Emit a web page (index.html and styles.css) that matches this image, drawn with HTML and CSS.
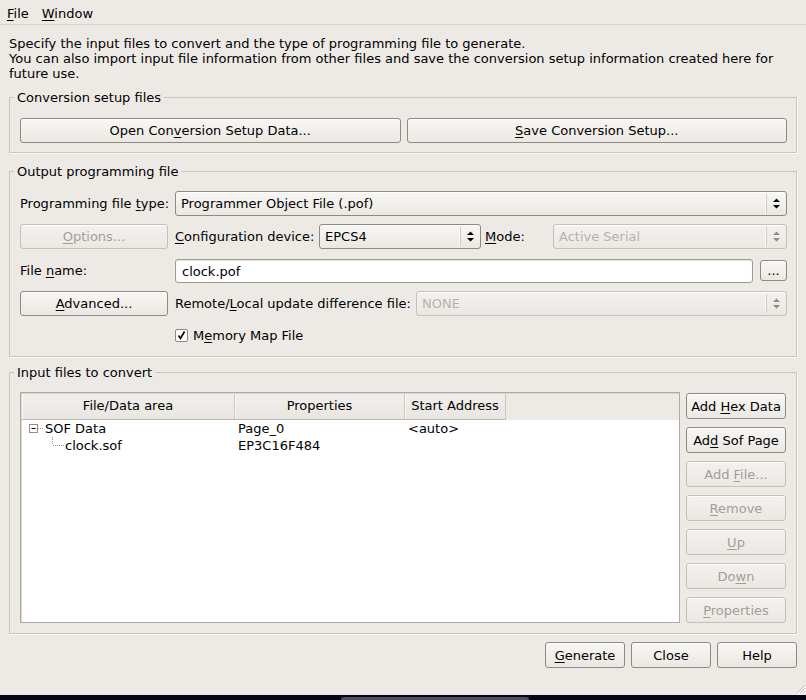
FILE: index.html
```html
<!DOCTYPE html>
<html>
<head>
<meta charset="utf-8">
<title>Convert Programming File</title>
<link rel="stylesheet" href="styles.css">
</head>
<body>
<div class="window">
  <div class="menubar">
    <span class="menu"><u>F</u>ile</span>
    <span class="menu"><u>W</u>indow</span>
  </div>

  <p class="desc">Specify the input files to convert and the type of programming file to generate.<br>You can also import input file information from other files and save the conversion setup information created here for future use.</p>

  <fieldset class="group g1">
    <legend class="legend">Conversion setup files</legend>
    <div class="g1-body">
      <button class="btn grow">Open Con<u>v</u>ersion Setup Data...</button>
      <button class="btn grow"><u>S</u>ave Conversion Setup...</button>
    </div>
  </fieldset>

  <fieldset class="group g2">
    <legend class="legend">Output programming file</legend>
    <div class="g2-body">
      <div class="row r1">
        <label class="lead">Programming file <u>t</u>ype:</label>
        <div class="combo grow"><span class="ctext">Programmer Object File (.pof)</span><span class="carrow"><svg width="7" height="11" viewBox="0 0 7 11"><path d="M3.5 0.5L7 4H0z M0 7h7l-3.5 3.5z"/></svg></span></div>
      </div>
      <div class="row r2">
        <button class="btn lead-btn" disabled><u>O</u>ptions...</button>
        <label class="lbl-conf"><u>C</u>onfiguration device:</label>
        <div class="combo epcs"><span class="ctext">EPCS4</span><span class="carrow"><svg width="7" height="11" viewBox="0 0 7 11"><path d="M3.5 0.5L7 4H0z M0 7h7l-3.5 3.5z"/></svg></span></div>
        <label class="lbl-mode"><u>M</u>ode:</label>
        <div class="combo grow disabled"><span class="ctext">Active Serial</span><span class="carrow"><svg width="7" height="11" viewBox="0 0 7 11"><path d="M3.5 0.5L7 4H0z M0 7h7l-3.5 3.5z"/></svg></span></div>
      </div>
      <div class="row r3">
        <label class="lead">File <u>n</u>ame:</label>
        <div class="input grow">clock.pof</div>
        <button class="btn dots">...</button>
      </div>
      <div class="row r4">
        <button class="btn lead-btn"><u>A</u>dvanced...</button>
        <label class="lbl-remote">Remote/<u>L</u>ocal update difference file:</label>
        <div class="combo grow disabled"><span class="ctext">NONE</span><span class="carrow"><svg width="7" height="11" viewBox="0 0 7 11"><path d="M3.5 0.5L7 4H0z M0 7h7l-3.5 3.5z"/></svg></span></div>
      </div>
      <div class="row r5">
        <span class="check"><svg width="11" height="11" viewBox="0 0 11 11"><path d="M2.5 5.5L4.5 8.5L8.5 1.5" fill="none" stroke="#000" stroke-width="1.6"/></svg></span>
        <span class="check-label">M<u>e</u>mory Map File</span>
      </div>
    </div>
  </fieldset>

  <fieldset class="group g3">
    <legend class="legend">Input files to convert</legend>
    <div class="g3-body">
      <div class="tree">
        <div class="thead">
          <div class="th">File/Data area</div>
          <div class="th">Properties</div>
          <div class="th">Start Address</div>
          <div class="th-fill"></div>
        </div>
        <div class="trow">
          <div class="tcell c1">
            <svg class="tlines" width="24" height="17" viewBox="0 0 24 17"><rect x="8.5" y="4.5" width="8" height="8" fill="#fff" stroke="#8f8f8f"/><path d="M10.5 8.5h4" stroke="#000"/><path d="M17 8.5h6" stroke="#9a9a9a" stroke-dasharray="1 1"/></svg>
            <span>SOF Data</span>
          </div>
          <div class="tcell c2">Page_0</div>
          <div class="tcell c3">&lt;auto&gt;</div>
        </div>
        <div class="trow">
          <div class="tcell c1">
            <svg class="tlines" width="44" height="17" viewBox="0 0 44 17"><path d="M31.5 0v8 M32 8.5h11" stroke="#9a9a9a" stroke-dasharray="1 1"/></svg>
            <span>clock.sof</span>
          </div>
          <div class="tcell c2">EP3C16F484</div>
          <div class="tcell c3"></div>
        </div>
      </div>
      <div class="side">
        <button class="btn side-btn">Add <u>H</u>ex Data</button>
        <button class="btn side-btn">Ad<u>d</u> Sof Page</button>
        <button class="btn side-btn" disabled>Add <u>F</u>ile...</button>
        <button class="btn side-btn" disabled><u>R</u>emove</button>
        <button class="btn side-btn" disabled><u>U</u>p</button>
        <button class="btn side-btn" disabled>Do<u>w</u>n</button>
        <button class="btn side-btn" disabled><u>P</u>roperties</button>
      </div>
    </div>
  </fieldset>

  <div class="actions">
    <button class="btn act"><u>G</u>enerate</button>
    <button class="btn act">Close</button>
    <button class="btn act">Help</button>
  </div>

  <svg class="grip" width="12" height="12" viewBox="0 0 12 12"><path d="M11 3L3 11 M11 6L6 11 M11 9L9 11" stroke="#c4c0ba" stroke-width="1"/><path d="M12 4L4 12 M12 7L7 12 M12 10L10 12" stroke="#fff" stroke-width="1"/></svg>

  <div class="taskbar"><span class="task-tab"></span></div>
</div>
</body>
</html>
```

FILE: styles.css
```css
* { box-sizing: border-box; }

body {
  margin: 0;
  background: #edeae6;
  font-family: "DejaVu Sans", "Noto Sans", sans-serif;
  font-size: 13px;
  line-height: 15px;
  color: #000;
}

u { text-decoration: underline; text-underline-offset: 2px; }

.window {
  width: 806px;
  height: 700px;
  display: flex;
  flex-direction: column;
  position: relative;
  overflow: hidden;
  background: #edeae6;
}

/* menu bar */
.menubar {
  height: 25px;
  border-bottom: 1px solid #d7d3cd;
  display: flex;
  gap: 13px;
  padding-left: 7px;
  flex: none;
}
.menu { padding-top: 6px; }

.desc {
  margin: 11px 10px 0 9px;
  flex: none;
}

/* group boxes */
.group {
  margin: 9px 9px 0 9px;
  padding: 0;
  min-inline-size: 0;
  border: 1px solid #c9c5be;
  box-shadow: 1px 1px 0 #fbfaf8;
  flex: none;
}
.legend {
  margin-left: 4px;
  padding: 0 3px;
  line-height: 15px;
}
.g2 { margin-top: 11px; }
.g3 { margin-top: 8px; }

.g1-body {
  display: flex;
  gap: 6px;
  padding: 13px 9px 9px 10px;
}
.grow { flex: 1 1 0; min-width: 0; }

/* buttons */
.btn {
  font: inherit;
  color: #000;
  height: 25px;
  padding: 0 4px;
  border: 1px solid #8d8983;
  border-radius: 3px;
  background: linear-gradient(#f8f7f5, #ebe8e3);
  box-shadow: inset 0 1px 0 #fff;
  text-align: center;
  white-space: nowrap;
}
.btn:disabled {
  color: #a29f9a;
  border-color: #c4c0ba;
  background: linear-gradient(#f3f1ee, #ebe8e4);
}

/* output group */
.g2-body {
  padding: 12px 9px 11px 10px;
  display: flex;
  flex-direction: column;
}
.row {
  display: flex;
  align-items: center;
  height: 25px;
}
.r2 { margin-top: 8px; }
.r3 { margin-top: 9px; }
.r4 { margin-top: 8px; }
.r5 { margin-top: 9px; height: 20px; padding-left: 155px; }

.lead { width: 155px; flex: none; white-space: nowrap; }
.lead-btn { width: 148px; flex: none; margin-right: 7px; }
.lbl-conf { width: 144px; flex: none; white-space: nowrap; }
.lbl-mode { width: 68px; flex: none; margin-left: 4px; white-space: nowrap; }
.lbl-remote { width: 241px; flex: none; white-space: nowrap; }

.combo {
  height: 25px;
  display: flex;
  align-items: center;
  border: 1px solid #8d8983;
  border-radius: 3px;
  background: linear-gradient(#f8f7f5, #ebe8e3);
  box-shadow: inset 0 1px 0 #fff;
}
.combo.epcs { width: 162px; flex: none; }
.ctext {
  flex: 1;
  padding-left: 5px;
  white-space: nowrap;
  overflow: hidden;
}
.carrow {
  width: 20px;
  height: 19px;
  border-left: 1px solid #cdc9c3;
  box-shadow: -1px 0 0 #fbfaf8;
  display: flex;
  align-items: center;
  justify-content: center;
  flex: none;
}
.carrow svg { fill: #000; }
.combo.disabled {
  border-color: #c4c0ba;
  color: #b5b2ad;
  background: linear-gradient(#f3f1ee, #ebe8e4);
}
.combo.disabled .carrow svg { fill: #8f8c87; }

.input {
  height: 24px;
  border: 1px solid #9f9b95;
  border-radius: 3px;
  background: #fff;
  box-shadow: inset 0 1px 1px #e4e1dc;
  padding: 4px 0 0 6px;
}
.dots {
  width: 27px;
  height: 21px;
  flex: none;
  margin-left: 7px;
  padding: 0;
  line-height: 12px;
}

.check {
  width: 13px;
  height: 13px;
  border: 1px solid #8d8983;
  border-radius: 2px;
  background: #fff;
  display: flex;
  align-items: center;
  justify-content: center;
  flex: none;
}
.check-label { margin-left: 5px; }

/* input files group */
.g3-body {
  display: flex;
  gap: 6px;
  padding: 12px 10px 10px 10px;
}
.tree {
  flex: 1;
  height: 231px;
  border: 1px solid #aeaaa3;
  box-shadow: inset 1px 1px 0 #d9d6d1;
  background: #fff;
  display: flex;
  flex-direction: column;
}
.thead {
  display: grid;
  grid-template-columns: 213px 170px 101px 1fr;
  height: 26px;
  flex: none;
  background: #edeae6;
  margin: 1px 0 0 1px;
}
.th {
  text-align: center;
  line-height: 24px;
  border-right: 1px solid #cac6bf;
  border-bottom: 1px solid #bcb8b1;
  background: linear-gradient(#f1efec, #e9e6e1);
  box-shadow: inset 1px 0 0 #fbfaf8;
  white-space: nowrap;
}
.th-fill { background: #edeae6; }

.trow {
  display: grid;
  grid-template-columns: 213px 170px 1fr;
  height: 17px;
  line-height: 17px;
  padding-left: 0;
}
.tcell { white-space: nowrap; }
.c1 { display: flex; align-items: center; }
.c1 span { line-height: 17px; }
.tlines { flex: none; }
.c2, .c3 { padding-left: 4px; }

.side {
  width: 100px;
  display: flex;
  flex-direction: column;
  gap: 8px;
  padding-top: 1px;
}
.side-btn { height: 26px; width: 100px; }

/* dialog buttons */
.actions {
  display: flex;
  justify-content: flex-end;
  gap: 6px;
  margin-top: 8px;
  padding-right: 9px;
  flex: none;
}
.act { width: 80px; height: 26px; }

.grip {
  position: absolute;
  right: 0;
  bottom: 6px;
}

/* desktop taskbar strip */
.taskbar {
  margin-top: auto;
  height: 5px;
  background: #04051a;
  flex: none;
  display: flex;
  align-items: flex-end;
}
.task-tab {
  margin-left: 341px;
  width: 188px;
  height: 3px;
  background: #4b4e63;
  border-radius: 3px 3px 0 0;
}
```
